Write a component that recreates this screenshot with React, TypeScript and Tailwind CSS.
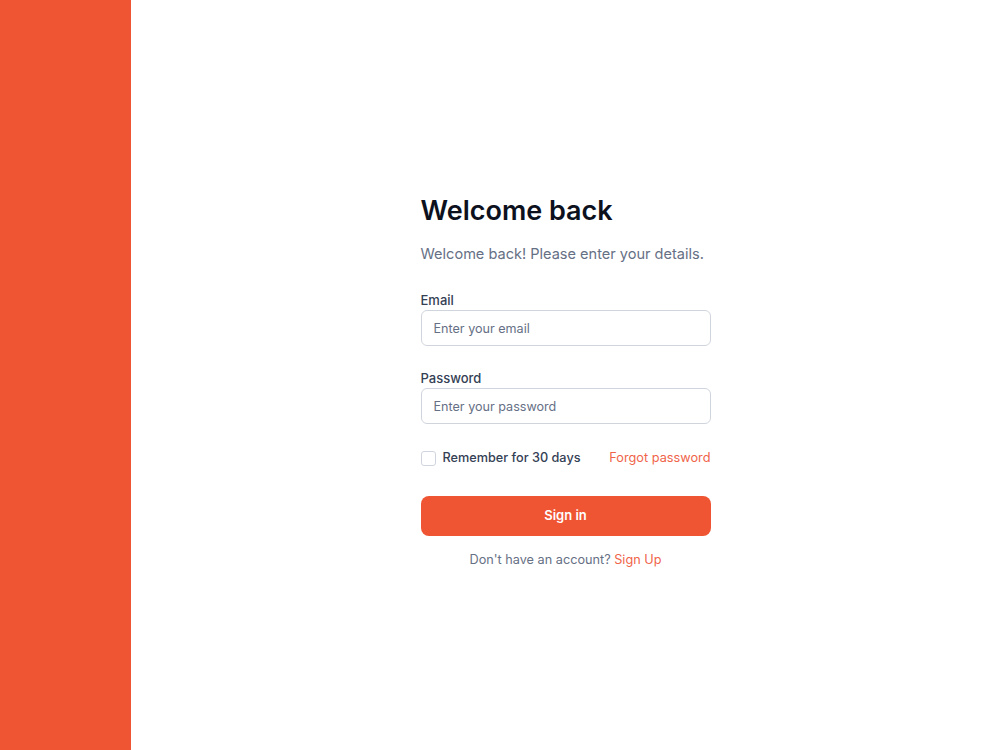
import { useState } from "react";

export default function App() {
  const [remember, setRemember] = useState(false);

  return (
    <div className="flex h-[750px] w-full bg-white font-['Inter',sans-serif]">
      <aside className="w-[131px] shrink-0 bg-[#ef5533]" />
      <main className="flex flex-1 items-center justify-center pt-[13px]">
        <form className="flex w-[290px] flex-col" onSubmit={(e) => e.preventDefault()}>
          <h1 className="text-[27px] leading-9 font-semibold text-[#0c111d]">Welcome back</h1>
          <p className="mt-[13px] whitespace-nowrap text-[14.55px] leading-6 text-[#667085]">
            Welcome back! Please enter your details.
          </p>

          <label className="mt-6 text-[13px] leading-5 font-medium text-[#344054]">Email</label>
          <input
            type="email"
            placeholder="Enter your email"
            className="h-9 rounded-md border border-[#d0d5dd] px-3 text-[12.6px] text-[#101828] placeholder:text-[#667085] outline-none"
          />

          <label className="mt-[22px] text-[13px] leading-5 font-medium text-[#344054]">Password</label>
          <input
            type="password"
            placeholder="Enter your password"
            className="h-9 rounded-md border border-[#d0d5dd] px-3 text-[12.6px] text-[#101828] placeholder:text-[#667085] outline-none"
          />

          <div className="mt-[26px] flex h-4 items-center justify-between">
            <label className="flex items-center gap-[7px] text-[12.7px] font-medium text-[#344054]">
              <input
                type="checkbox"
                checked={remember}
                onChange={(e) => setRemember(e.target.checked)}
                className="h-[15px] w-[15px] appearance-none rounded-[3px] border border-[#d0d5dd] checked:bg-[#ef5533]"
              />
              Remember for 30 days
            </label>
            <a href="#" className="text-[12.75px] text-[#f0644a]">
              Forgot password
            </a>
          </div>

          <button
            type="submit"
            className="mt-[30px] h-10 rounded-lg bg-[#ef5533] text-[13px] font-semibold text-white"
          >
            Sign in
          </button>

          <p className="mt-[14px] text-center text-[12.7px] leading-5 text-[#667085]">
            Don't have an account? <a href="#" className="text-[#f0644a]">Sign Up</a>
          </p>
        </form>
      </main>
    </div>
  );
}
